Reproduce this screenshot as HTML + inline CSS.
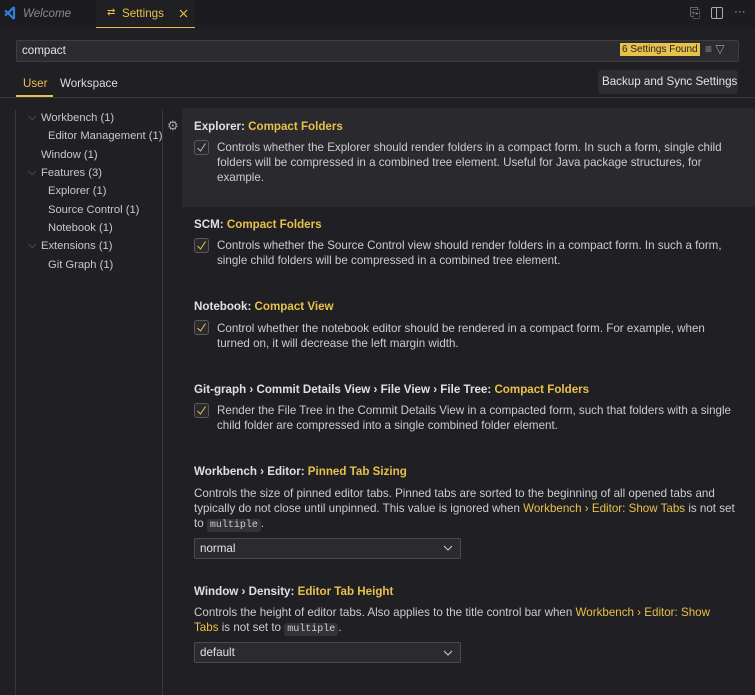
<!DOCTYPE html><html><head><style>
body{margin:0;width:755px;height:695px;background:#201f23;font-family:"Liberation Sans",sans-serif;font-size:11.6px;color:#cccccc;position:relative;overflow:hidden}
.a{position:absolute;white-space:nowrap}
.y{color:#e8c14a}
b{font-weight:bold;color:#e0e0e0}
.d{line-height:15px;white-space:normal}
code{font-family:"Liberation Mono",monospace;background:#333236;padding:1px 3px;border-radius:3px;font-size:10px}
.cb{position:absolute;width:13px;height:13px;border:1px solid #5a595e;background:#2a292d;border-radius:3px}
.sel{position:absolute;left:194px;width:265px;height:19px;border:1px solid #4a494e;background:#2b2a2e;border-radius:2px}
.t{position:absolute;color:#c8c8c8;font-size:11.2px;white-space:nowrap}
.ck{position:absolute;width:9px;height:9px}
</style></head><body>
<div class="a" style="left:0;top:0;width:755px;height:28px;background:#1c1b1f"></div>
<svg class="a" style="left:4px;top:6px" width="14" height="14" viewBox="0 0 14 14"><path d="M10 1L4 7l6 6M10 1v12M1 4.5l3 2.5-3 2.5" stroke="#2f7fd6" stroke-width="2.2" fill="none"/></svg>
<div class="a" style="left:23px;top:7px;color:#8a898e;font-style:italic">Welcome</div>
<div class="a" style="left:96px;top:0;width:99px;height:28px;background:#201f23;border-bottom:1px solid #e8c14a;box-sizing:border-box"></div>
<div class="a y" style="left:107px;top:7px;font-size:10px">⇄</div>
<div class="a y" style="left:122px;top:7px">Settings</div>
<svg class="a" style="left:179px;top:9px" width="9" height="9"><path d="M1 1l7 7M8 1l-7 7" stroke="#e8c14a" stroke-width="1.2"/></svg>
<div class="a" style="left:690px;top:5px;color:#aaa;font-size:13px">⎘</div>
<div class="a" style="left:711px;top:7px;width:10px;height:10px;border:1px solid #aaa;border-radius:2px"></div>
<div class="a" style="left:716px;top:7px;width:1px;height:11px;background:#aaa"></div>
<div class="a" style="left:734px;top:5px;color:#aaa">···</div>
<div class="a" style="left:16px;top:40px;width:721px;height:20px;border:1px solid #3e3d42;background:#2c2b2f;border-radius:2px"></div>
<div class="a" style="left:22px;top:44px;color:#e4e4e4">compact</div>
<div class="a" style="left:620px;top:43px;background:#e8c14a;color:#222;padding:1px 2px;font-size:10px">6 Settings Found</div>
<div class="a" style="left:705px;top:42px;color:#999;font-size:12px">≡ ▽</div>
<div class="a y" style="left:23px;top:77px">User</div>
<div class="a" style="left:16px;top:95px;width:37px;height:2px;background:#e8c14a"></div>
<div class="a" style="left:60px;top:77px;color:#ddd">Workspace</div>
<div class="a" style="left:0;top:97px;width:755px;height:1px;background:#38373c"></div>
<div class="a" style="left:598px;top:70px;width:140px;height:24px;background:#2e2d31;border-radius:3px"></div>
<div class="a" style="left:602px;top:75px;color:#e4e4e4">Backup and Sync Settings</div>
<div class="a" style="left:15px;top:110px;width:1px;height:585px;background:#38373c"></div>
<div class="a" style="left:162px;top:110px;width:1px;height:585px;background:#38373c"></div>
<div class="t" style="left:28px;top:111px;color:#777">⌵</div><div class="t" style="left:41px;top:112px">Workbench (1)</div>
<div class="t" style="left:48px;top:130px">Editor Management (1)</div>
<div class="t" style="left:41px;top:149px">Window (1)</div>
<div class="t" style="left:28px;top:166px;color:#777">⌵</div><div class="t" style="left:41px;top:167px">Features (3)</div>
<div class="t" style="left:48px;top:185px">Explorer (1)</div>
<div class="t" style="left:48px;top:204px">Source Control (1)</div>
<div class="t" style="left:48px;top:222px">Notebook (1)</div>
<div class="t" style="left:28px;top:239px;color:#777">⌵</div><div class="t" style="left:41px;top:240px">Extensions (1)</div>
<div class="t" style="left:48px;top:259px">Git Graph (1)</div>
<div class="a" style="left:167px;top:118px;color:#aaa;font-size:13px">⚙</div>
<div class="a" style="left:182px;top:108px;width:573px;height:99px;background:#2a292d"></div>
<div class="a" style="left:194px;top:120px"><b>Explorer: </b><b class="y">Compact Folders</b></div>
<div class="cb" style="left:194px;top:140px"></div><svg class="ck" style="left:197px;top:143px"><path d="M0.5 5l3 3 5-7.5" stroke="#bbb" fill="none"/></svg>
<div class="a d" style="left:217px;top:140px;width:515px">Controls whether the Explorer should render folders in a compact form. In such a form, single child folders will be compressed in a combined tree element. Useful for Java package structures, for example.</div>
<div class="a" style="left:194px;top:218px"><b>SCM: </b><b class="y">Compact Folders</b></div>
<div class="cb" style="left:194px;top:238px"></div><svg class="ck" style="left:197px;top:241px"><path d="M0.5 5l3 3 5-7.5" stroke="#e8c14a" fill="none"/></svg>
<div class="a d" style="left:217px;top:238px;width:530px">Controls whether the Source Control view should render folders in a compact form. In such a form, single child folders will be compressed in a combined tree element.</div>
<div class="a" style="left:194px;top:300px"><b>Notebook: </b><b class="y">Compact View</b></div>
<div class="cb" style="left:194px;top:320px"></div><svg class="ck" style="left:197px;top:323px"><path d="M0.5 5l3 3 5-7.5" stroke="#e8c14a" fill="none"/></svg>
<div class="a d" style="left:217px;top:321px;width:520px">Control whether the notebook editor should be rendered in a compact form. For example, when turned on, it will decrease the left margin width.</div>
<div class="a" style="left:194px;top:383px"><b>Git-graph › Commit Details View › File View › File Tree: </b><b class="y">Compact Folders</b></div>
<div class="cb" style="left:194px;top:403px"></div><svg class="ck" style="left:197px;top:406px"><path d="M0.5 5l3 3 5-7.5" stroke="#e8c14a" fill="none"/></svg>
<div class="a d" style="left:217px;top:403px;width:520px">Render the File Tree in the Commit Details View in a compacted form, such that folders with a single child folder are compressed into a single combined folder element.</div>
<div class="a" style="left:194px;top:465px"><b>Workbench › Editor: </b><b class="y">Pinned Tab Sizing</b></div>
<div class="a d" style="left:194px;top:486px;width:545px">Controls the size of pinned editor tabs. Pinned tabs are sorted to the beginning of all opened tabs and typically do not close until unpinned. This value is ignored when <span class="y">Workbench › Editor: Show Tabs</span> is not set to <code>multiple</code>.</div>
<div class="sel" style="top:538px"></div><div class="a" style="left:200px;top:542px;color:#e4e4e4">normal</div><svg class="a" style="left:443px;top:545px" width="10" height="6"><path d="M1 1l4 4 4-4" stroke="#ccc" fill="none"/></svg>
<div class="a" style="left:194px;top:585px"><b>Window › Density: </b><b class="y">Editor Tab Height</b></div>
<div class="a d" style="left:194px;top:605px;width:520px">Controls the height of editor tabs. Also applies to the title control bar when <span class="y">Workbench › Editor: Show Tabs</span> is not set to <code>multiple</code>.</div>
<div class="sel" style="top:642px"></div><div class="a" style="left:200px;top:646px;color:#e4e4e4">default</div><svg class="a" style="left:443px;top:650px" width="10" height="6"><path d="M1 1l4 4 4-4" stroke="#ccc" fill="none"/></svg>
</body></html>
